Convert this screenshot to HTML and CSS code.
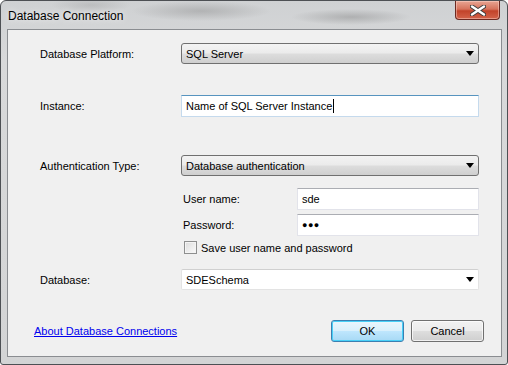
FILE: index.html
```html
<!DOCTYPE html>
<html lang="en">
<head>
<meta charset="UTF-8">
<title>Database Connection</title>
<link rel="stylesheet" href="styles.css">
</head>
<body>
<div class="window">
    <div class="titlebar">
        <span class="title">Database Connection</span>
        <div class="close">
            <svg width="16" height="11" viewBox="0 0 16 11">
                <path d="M2 1.5 L14 9.5 M14 1.5 L2 9.5" stroke="#3b3b3b" stroke-width="4.2" stroke-linecap="round"/>
                <path d="M2 1.5 L14 9.5 M14 1.5 L2 9.5" stroke="#fff" stroke-width="2.4" stroke-linecap="round"/>
            </svg>
        </div>
    </div>

    <div class="client">
        <div class="row row-platform">
            <span class="label">Database Platform:</span>
            <div class="combo"><span>SQL Server</span><i class="arrow"></i></div>
        </div>

        <div class="row row-instance">
            <span class="label">Instance:</span>
            <div class="textbox focused"><span>Name of SQL Server Instance</span><i class="caret"></i></div>
        </div>

        <div class="row row-auth">
            <span class="label">Authentication Type:</span>
            <div class="combo"><span>Database authentication</span><i class="arrow"></i></div>
        </div>

        <div class="row row-creds">
            <span class="label"></span>
            <div class="creds">
                <span class="sublabel">User name:</span>
                <div class="textbox"><span>sde</span></div>
                <span class="sublabel">Password:</span>
                <div class="textbox"><span class="dots">&#9679;&#9679;&#9679;</span></div>
                <label class="check"><i class="box"></i>Save user name and password</label>
            </div>
        </div>

        <div class="row row-database">
            <span class="label">Database:</span>
            <div class="combo editable"><span>SDESchema</span><i class="arrow"></i></div>
        </div>

        <div class="footer">
            <a href="#" class="help">About Database Connections</a>
            <div class="buttons">
                <button class="btn default">OK</button>
                <button class="btn">Cancel</button>
            </div>
        </div>
    </div>
</div>
</body>
</html>
```

FILE: styles.css
```css
body{
    margin: 0;
    background-color: #fff;
    font-family: "Liberation Sans", Arial, sans-serif;
    font-size: 11px;
    color: #000;
}

.window{
    width: 506px;
    height: 363px;
    border: 1px solid #4d5054;
    border-radius: 6px 6px 3px 3px;
    display: flex;
    flex-direction: column;
    overflow: hidden;
    background:
        radial-gradient(ellipse 70px 10px at 200px 10px, rgba(120,120,120,0.35), transparent),
        radial-gradient(ellipse 60px 8px at 350px 16px, rgba(110,110,110,0.35), transparent),
        radial-gradient(ellipse 40px 8px at 90px 4px, rgba(130,130,130,0.25), transparent),
        linear-gradient(to bottom, #cfd1d3, #d8d9da 60px, #d3d4d5);
}

.titlebar{
    height: 28px;
    display: flex;
    align-items: flex-start;
}
.title{
    font-size: 12px;
    padding: 8px 0 0 7px;
    color: #000;
    text-shadow: 0 0 6px rgba(255,255,255,0.9);
}
.close{
    margin-left: auto;
    margin-right: 7px;
    width: 43px;
    height: 18px;
    border: 1px solid #6c2a22;
    border-top: none;
    border-radius: 0 0 4px 4px;
    background: linear-gradient(to bottom, #e8a593 0%, #d6735c 45%, #c2432a 55%, #d3634a 100%);
    box-shadow: inset 0 0 0 1px rgba(255,220,210,0.45);
    display: flex;
    align-items: center;
    justify-content: center;
}

.client{
    flex: 1;
    margin: 0 5px 7px 6px;
    border: 1px solid #8a8d91;
    background-color: #f0f0f0;
    display: flex;
    flex-direction: column;
}

.row{
    display: grid;
    grid-template-columns: 141px 298px;
    align-items: center;
    padding-left: 32px;
}
.row-platform{ margin-top: 13px; }
.row-instance{ margin-top: 31px; }
.row-auth{ margin-top: 38px; }
.row-creds{ margin-top: 12px; align-items: start; }
.row-database{ margin-top: 15px; }

.combo{
    height: 19px;
    border: 1px solid #707070;
    border-radius: 3px;
    background: linear-gradient(to bottom, #f3f3f3 0%, #ebebeb 48%, #dddddd 52%, #cfcfcf 100%);
    display: flex;
    align-items: center;
    padding: 0 0 0 4px;
}
.combo.editable{
    background: #fff;
    border-color: #e3e3e3;
    border-top-color: #d0d0d0;
    border-radius: 2px;
}
.combo span{ flex: 1; }
.arrow{
    width: 0;
    height: 0;
    border-left: 4px solid transparent;
    border-right: 4px solid transparent;
    border-top: 5px solid #000;
    margin-right: 4px;
}

.textbox{
    height: 20px;
    border: 1px solid #e2e3ea;
    border-top-color: #abadb3;
    background-color: #fff;
    display: flex;
    align-items: center;
    padding-left: 4px;
}
.textbox.focused{
    border-color: #c5daed;
    border-top-color: #5794bf;
}
.caret{
    width: 1px;
    height: 14px;
    background-color: #000;
    margin-left: 1px;
}
.dots{
    font-size: 9px;
    letter-spacing: 0.5px;
}

.creds{
    display: grid;
    grid-template-columns: 116px 182px;
    row-gap: 4px;
    align-items: center;
}
.sublabel{ padding-left: 2px; }
.check{
    grid-column: 1 / 3;
    display: flex;
    align-items: center;
    gap: 4px;
    padding-left: 3px;
    margin-top: 1px;
}
.box{
    width: 11px;
    height: 11px;
    border: 1px solid #8e8f8f;
    background: linear-gradient(135deg, #dcdcdc, #fbfbfb);
    box-shadow: inset 0 0 0 1px #f4f4f4;
}

.footer{
    margin-top: 30px;
    display: flex;
    align-items: center;
    padding: 0 17px 0 26px;
}
.help{
    color: #0000ee;
    text-decoration: underline;
}
.buttons{
    margin-left: auto;
    display: flex;
    gap: 7px;
}
.btn{
    width: 73px;
    height: 22px;
    font-family: inherit;
    font-size: 11px;
    color: #000;
    border: 1px solid #707070;
    border-radius: 3px;
    background: linear-gradient(to bottom, #f2f2f2 0%, #ebebeb 48%, #dddddd 52%, #cfcfcf 100%);
    box-shadow: inset 0 0 0 1px rgba(255,255,255,0.7);
}
.btn.default{
    border-color: #3c7fb1;
    background: linear-gradient(to bottom, #eaf6fd 0%, #d9f0fc 48%, #bee6fd 52%, #a7d9f5 100%);
    box-shadow: inset 0 0 0 1px #48d0f7;
}
```
